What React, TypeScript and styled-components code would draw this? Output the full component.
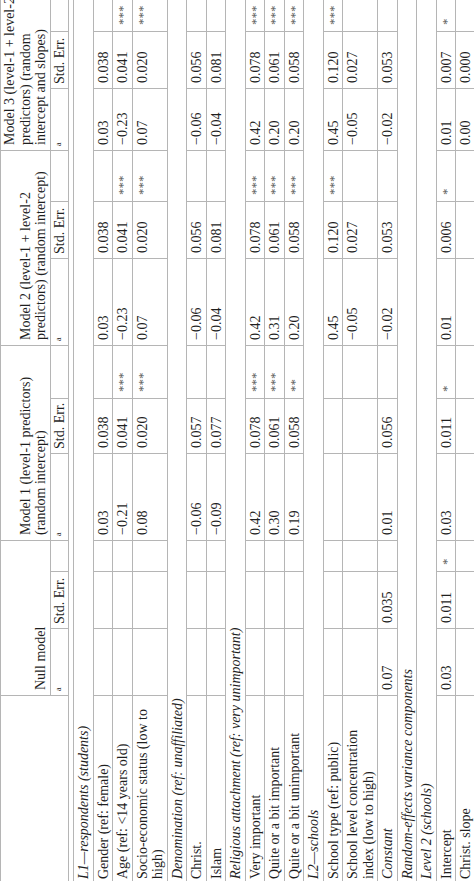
import React from "react";
import styled, { createGlobalStyle } from "styled-components";

const GlobalStyle = createGlobalStyle`
  html, body {
    margin: 0;
    padding: 0;
    background: #ffffff;
  }
  body {
    overflow: hidden;
  }
`;

// column widths of the table as it is laid out before turning it on its side
const colWidths = [189, 67, 57, 31, 87, 55, 53, 87, 57, 51, 62, 57, 45];

const M = "\u2212";

type DataRow = { kind: "data"; label: string; italic?: boolean; cells: string[] };
type SectionRow = { kind: "section"; label: React.ReactNode };
type Row = DataRow | SectionRow;

const e = ["", "", ""];

const rows: Row[] = [
  { kind: "section", label: "L1\u2014respondents (students)" },
  {
    kind: "data",
    label: "Gender (ref: female)",
    cells: [...e, "0.03", "0.038", "", "0.03", "0.038", "", "0.03", "0.038", ""],
  },
  {
    kind: "data",
    label: "Age (ref: <14 years old)",
    cells: [...e, M + "0.21", "0.041", "***", M + "0.23", "0.041", "***", M + "0.23", "0.041", "***"],
  },
  {
    kind: "data",
    label: "Socio-economic status (low to high)",
    cells: [...e, "0.08", "0.020", "***", "0.07", "0.020", "***", "0.07", "0.020", "***"],
  },
  { kind: "section", label: "Denomination (ref: unaffiliated)" },
  {
    kind: "data",
    label: "Christ.",
    cells: [...e, M + "0.06", "0.057", "", M + "0.06", "0.056", "", M + "0.06", "0.056", ""],
  },
  {
    kind: "data",
    label: "Islam",
    cells: [...e, M + "0.09", "0.077", "", M + "0.04", "0.081", "", M + "0.04", "0.081", ""],
  },
  { kind: "section", label: "Religious attachment (ref: very unimportant)" },
  {
    kind: "data",
    label: "Very important",
    cells: [...e, "0.42", "0.078", "***", "0.42", "0.078", "***", "0.42", "0.078", "***"],
  },
  {
    kind: "data",
    label: "Quite or a bit important",
    cells: [...e, "0.30", "0.061", "***", "0.31", "0.061", "***", "0.20", "0.061", "***"],
  },
  {
    kind: "data",
    label: "Quite or a bit unimportant",
    cells: [...e, "0.19", "0.058", "**", "0.20", "0.058", "***", "0.20", "0.058", "***"],
  },
  { kind: "section", label: "L2\u2014schools" },
  {
    kind: "data",
    label: "School type (ref: public)",
    cells: [...e, "", "", "", "0.45", "0.120", "***", "0.45", "0.120", "***"],
  },
  {
    kind: "data",
    label: "School level concentration index (low to high)",
    cells: [...e, "", "", "", M + "0.05", "0.027", "", M + "0.05", "0.027", ""],
  },
  {
    kind: "data",
    label: "Constant",
    italic: true,
    cells: ["0.07", "0.035", "", "0.01", "0.056", "", M + "0.02", "0.053", "", M + "0.02", "0.053", ""],
  },
  { kind: "section", label: "Random-effects variance components" },
  { kind: "section", label: "Level 2 (schools)" },
  {
    kind: "data",
    label: "Intercept",
    cells: ["0.03", "0.011", "*", "0.03", "0.011", "*", "0.01", "0.006", "*", "0.01", "0.007", "*"],
  },
  {
    kind: "data",
    label: "Christ. slope",
    cells: ["", "", "", "", "", "", "", "", "", "0.00", "0.000", ""],
  },
];

const models = [
  "Null model",
  "Model 1 (level-1 predictors) (random intercept)",
  "Model 2 (level-1 + level-2 predictors) (random intercept)",
  "Model 3 (level-1 + level-2 predictors) (random intercept and slopes)",
];

export default function App() {
  return (
    <>
      <GlobalStyle />
      <Viewport>
        <Turned>
          <Table>
            <colgroup>
              {colWidths.map((w, i) => (
                <col key={"col-" + i} style={{ width: w }} />
              ))}
            </colgroup>
            <thead>
              <tr>
                <HeadCell rowSpan={2} />
                {models.map((m) => (
                  <GroupCell key={m} colSpan={3}>
                    {m}
                  </GroupCell>
                ))}
              </tr>
              <tr>
                {models.map((m) => (
                  <React.Fragment key={"sub-" + m}>
                    <SubCell>
                      <Mark>a</Mark>
                    </SubCell>
                    <SubCell>Std. Err.</SubCell>
                    <SubCell />
                  </React.Fragment>
                ))}
              </tr>
            </thead>
            <tbody>
              <tr>
                <Rule colSpan={13} />
              </tr>
              {rows.map((r, i) =>
                r.kind === "section" ? (
                  <tr key={"row-" + i}>
                    <Section colSpan={13}>{r.label}</Section>
                  </tr>
                ) : (
                  <tr key={"row-" + i}>
                    <Label $italic={r.italic}>{r.label}</Label>
                    {r.cells.map((c, j) => (
                      <Cell key={"c-" + i + "-" + j} $star={j % 3 === 2}>
                        {c}
                      </Cell>
                    ))}
                  </tr>
                )
              )}
            </tbody>
          </Table>
        </Turned>
      </Viewport>
    </>
  );
}

const Viewport = styled.div`
  width: 474px;
  height: 881px;
  overflow: hidden;
`;

// the table is printed sideways: its top runs along the left edge of the page
const Turned = styled.div`
  width: 881px;
  height: 474px;
  transform-origin: top left;
  transform: rotate(-90deg) translateX(-100%);
`;

const Table = styled.table`
  width: 898px;
  margin: -1px 0 0 -5px;
  table-layout: fixed;
  border-collapse: collapse;
  font-family: "Liberation Serif", "Times New Roman", serif;
  font-size: 14px;
  line-height: 15.5px;
  color: #1f1f1f;

  td,
  th {
    border: 1px solid #b5b5b5;
    padding: 2px 5px 1px;
    text-align: left;
    vertical-align: top;
    font-weight: normal;
  }
`;

const HeadCell = styled.th``;

const GroupCell = styled.th`
  && {
    vertical-align: bottom;
    padding-top: 1px;
  }
`;

const SubCell = styled.th`
  && {
    padding: 1px 4px;
    white-space: nowrap;
    overflow: hidden;
  }
`;

const Mark = styled.span`
  font-size: 8px;
  line-height: 8px;
  vertical-align: 3px;
`;

const Rule = styled.td`
  && {
    height: 4px;
    padding: 0;
    border-left: none;
    border-right: none;
  }
`;

const Section = styled.td`
  font-style: italic;
`;

const Label = styled.td<{ $italic?: boolean }>`
  font-style: ${(p) => (p.$italic ? "italic" : "normal")};
`;

const Cell = styled.td<{ $star?: boolean }>`
  && {
    white-space: nowrap;
    padding-left: ${(p) => (p.$star ? "6px" : "5px")};
    font-size: ${(p) => (p.$star ? "13px" : "14px")};
    color: ${(p) => (p.$star ? "#555" : "#1f1f1f")};
  }
`;
